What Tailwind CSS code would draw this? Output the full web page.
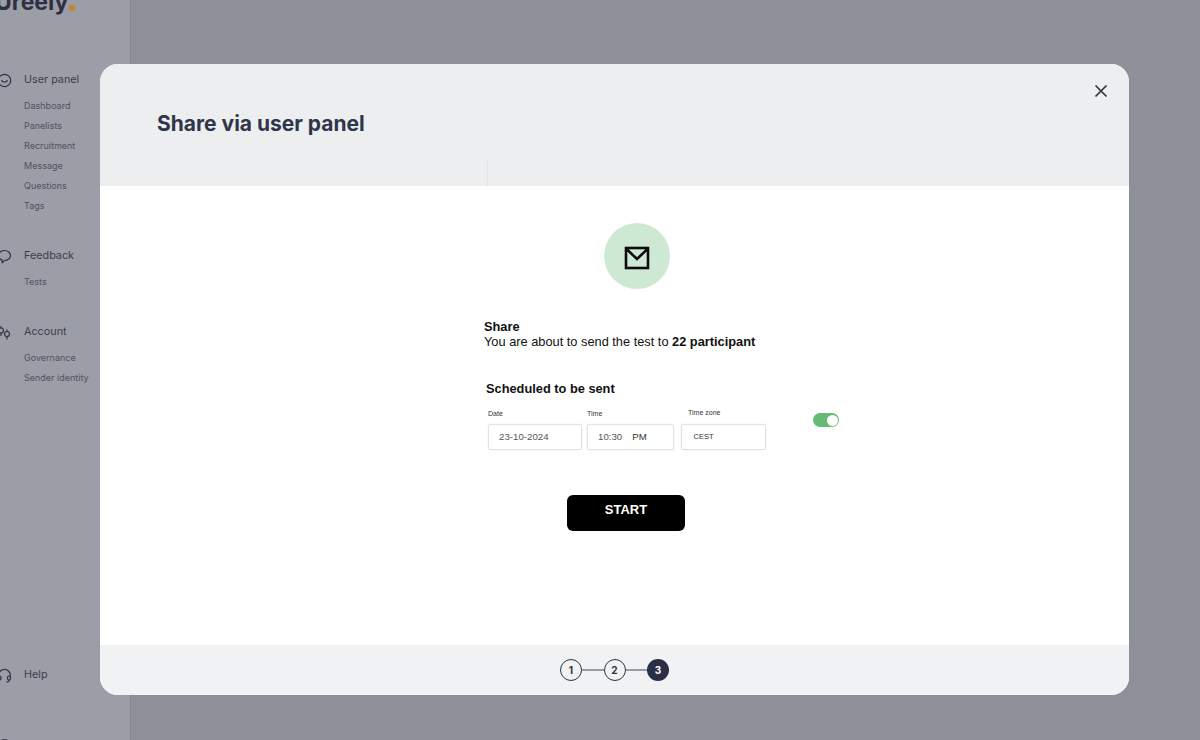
<!DOCTYPE html>
<html lang="en">
<head>
    <meta charset="UTF-8">
    <meta name="viewport" content="width=device-width, initial-scale=1.0">
    <title>Share via user panel</title>
    <script src="https://cdn.jsdelivr.net/npm/@tailwindcss/browser@4"></script>
</head>
<body class="relative flex h-[740px] w-[1200px] overflow-hidden bg-[#8d8f99] font-['Inter',sans-serif]">
    <!-- Sidebar behind the overlay -->
    <aside class="flex h-[740px] w-[131px] shrink-0 flex-col border-r border-[#84868f] bg-[#9b9da7] text-[#3b3e4d]">
        <div class="-mt-[12px] h-[67px] text-[23px] leading-[28px] font-bold text-[#2c3040]">
            <span class="-ml-[5px] inline-flex items-end">Ureely<span class="mb-[5px] ml-[1px] h-[6px] w-[6px] rounded-full rounded-tl-none bg-[#c6822f]"></span></span>
        </div>

        <div class="mt-[15px] flex h-5 items-center gap-[12px]">
            <svg class="h-[15px] w-[15px] shrink-0" style="margin-left:-3px" viewBox="0 0 15 15" fill="none" stroke="#2f3242" stroke-width="1.2"><circle cx="7.5" cy="7.5" r="6.2"/><path d="M4.5 7.2c.8 2.4 5.2 2.400 6 0"/></svg>
            <span class="text-[10.800px]">User panel</span>
        </div>
        <nav class="mt-[6px] flex flex-col pl-6 text-[9px] leading-5 text-[#50535f]">
            <a>Dashboard</a><a>Panelists</a><a>Recruitment</a><a>Message</a><a>Questions</a><a>Tags</a>
        </nav>

        <div class="mt-[30px] flex h-5 items-center gap-[12px]">
            <svg class="h-[15px] w-[15px] shrink-0" style="margin-left:-3px" viewBox="0 0 15 15" fill="none" stroke="#2f3242" stroke-width="1.2"><path d="M7.5 1.5c3.4 0 6 2.2 6 5s-2.6 5-6 5l-2.2 2-.5-2.6C2.800 10.200 1.500 8.500 1.500 6.500c0-2.800 2.600-5 6-5z"/></svg>
            <span class="text-[10.800px]">Feedback</span>
        </div>
        <nav class="mt-[6px] flex flex-col pl-6 text-[9px] leading-5 text-[#50535f]">
            <a>Tests</a>
        </nav>

        <div class="mt-[30px] flex h-5 items-center gap-[10px]">
            <svg class="h-[15px] w-[16px] shrink-0" style="margin-left:-2px" viewBox="0 0 16 15" fill="none" stroke="#2f3242" stroke-width="1.2"><circle cx="3" cy="5.500" r="2.500"/><path d="M3 1v2M3 8v3"/><circle cx="9" cy="9" r="2.500"/><path d="M9 4.500v2M9 11.500v3"/></svg>
            <span class="text-[10.800px]">Account</span>
        </div>
        <nav class="mt-[6px] flex flex-col pl-6 text-[9px] leading-5 text-[#50535f]">
            <a>Governance</a><a>Sender identity</a>
        </nav>

        <div class="mt-auto flex h-5 items-center gap-[12px]">
            <svg class="h-[15px] w-[15px] shrink-0" style="margin-left:-3px" viewBox="0 0 15 15" fill="none" stroke="#2f3242" stroke-width="1.2"><path d="M1.800 9V7a5.700 5.700 0 0 1 11.400 0v2"/><rect x="1" y="8" width="3" height="4" rx="1.500"/><rect x="10.500" y="8" width="3" height="4" rx="1.500"/><path d="M12.500 12c0 1-1 1.800-3 1.800"/></svg>
            <span class="text-[10.800px]">Help</span>
        </div>
        <!-- profile row, runs off the bottom of the window -->
        <div class="mt-[51px] -mb-[16px] flex h-5 items-center gap-[12px]">
            <span class="-ml-[3px] h-[15px] w-[15px] shrink-0 rounded-full border border-[#2f3242] bg-[#6e6f78]"></span>
            <span class="text-[10.800px] text-[#50535f]">Profile</span>
        </div>
    </aside>

    <!-- Modal -->
    <section class="absolute top-[64px] left-[100px] flex h-[631px] w-[1029px] flex-col overflow-hidden rounded-[18px] bg-white">
        <header class="relative h-[122px] shrink-0 bg-[#edeef0] pt-[45px] pl-[57px]">
            <h1 class="text-[21px] leading-[30px] font-bold text-[#30364a]">Share via user panel</h1>
            <button class="absolute top-[19px] right-[20px]">
                <svg class="h-4 w-4" viewBox="0 0 16 16" fill="none" stroke="#30343f" stroke-width="1.700"><path d="M2.500 2.500l11 11M13.500 2.500l-11 11"/></svg>
            </button>
            <div class="absolute bottom-0 left-[387px] h-[27px] w-px bg-[#e1e2e5]"></div>
        </header>

        <main class="flex-1 bg-white pt-[37px] font-['Liberation_Sans',Arial,sans-serif] text-[#111]">
            <div class="ml-[504px] flex h-[66px] w-[66px] items-center justify-center rounded-full bg-[#cde8d3] pt-[3px]">
                <svg class="h-[24px] w-[26px]" viewBox="0 0 26 24" fill="none" stroke="#0c0c0c" stroke-width="2.600"><rect x="2" y="2" width="22" height="20"/><path d="M2.500 3l10.500 10 10.500-10"/></svg>
            </div>

            <div class="mt-[30px] ml-[384px] text-[12.8px] leading-[15px]">
                <p class="font-bold">Share</p>
                <p>You are about to send the test to <b>22 participant</b></p>
            </div>

            <h2 class="mt-[32px] ml-[386px] text-[12.8px] leading-[16px] font-bold">Scheduled to be sent</h2>

            <div class="mt-[11px] ml-[388px] flex items-start">
                <label class="w-[94px] text-[7px] leading-[10px] text-[#333]">
                    <span class="block h-[16px] pt-[1px]">Date</span>
                    <span class="flex h-[26px] items-center rounded-[2px] border border-[#e2e2e2] pl-[10px] text-[9.700px] text-[#555] shadow-[0_0_2px_rgba(0,0,0,0.08)]">23-10-2024</span>
                </label>
                <label class="ml-[5px] w-[87px] text-[7px] leading-[10px] text-[#333]">
                    <span class="block h-[16px] pt-[1px]">Time</span>
                    <span class="flex h-[26px] items-center rounded-[2px] border border-[#e2e2e2] pl-[10px] text-[9.700px] text-[#555] shadow-[0_0_2px_rgba(0,0,0,0.08)]">10:30<span class="ml-[10px] text-[#333]">PM</span></span>
                </label>
                <label class="ml-[7px] w-[85px] text-[7px] leading-[10px] text-[#333]">
                    <span class="block h-[16px] pl-[7px]">Time zone</span>
                    <span class="flex h-[26px] items-center rounded-[2px] border border-[#e2e2e2] pl-[11.500px] text-[7.500px] text-[#333] shadow-[0_0_2px_rgba(0,0,0,0.08)]">CEST</span>
                </label>
                <div class="mt-[5px] ml-[47px] flex h-[14px] w-[26px] items-center justify-end rounded-full bg-[#63bb74] pr-[1.500px]">
                    <span class="h-[11px] w-[11px] rounded-full bg-white"></span>
                </div>
            </div>

            <button class="mt-[45px] ml-[467px] block h-[36px] w-[118px] rounded-[6px] bg-black pb-[7px] text-[13px] font-bold text-white">START</button>
        </main>

        <footer class="flex h-[50px] shrink-0 items-center justify-center bg-[#f1f2f4] text-[10px] font-bold text-[#2e3344]">
            <span class="flex h-[22px] w-[22px] items-center justify-center rounded-full border-[1.500px] border-[#2e3344]">1</span>
            <span class="h-[1.500px] w-[21.500px] bg-[#9a9ca3]"></span>
            <span class="flex h-[22px] w-[22px] items-center justify-center rounded-full border-[1.500px] border-[#2e3344]">2</span>
            <span class="h-[1.500px] w-[21.500px] bg-[#9a9ca3]"></span>
            <span class="flex h-[22px] w-[22px] items-center justify-center rounded-full bg-[#2a2f45] text-white">3</span>
        </footer>
    </section>
</body>
</html>
